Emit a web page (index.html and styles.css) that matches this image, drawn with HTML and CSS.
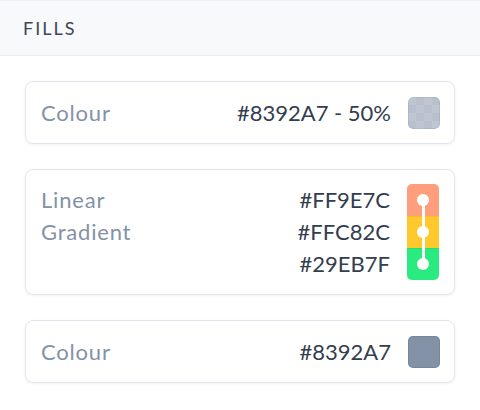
FILE: index.html
```html
<!DOCTYPE html>
<html>
<head>
<meta charset="utf-8">
<link rel="stylesheet" href="styles.css">
</head>
<body>
<div class="panel">
  <div class="header">FILLS</div>
  <div class="list">
    <div class="card">
      <div class="label">Colour</div>
      <div class="right">
        <div class="value">#8392A7 - 50%</div>
        <div class="swatch checker"><div class="tint"></div></div>
      </div>
    </div>
    <div class="card card-tall">
      <div class="label stack">
        <div>Linear</div>
        <div>Gradient</div>
      </div>
      <div class="right top">
        <div class="value stack">
          <div>#FF9E7C</div>
          <div>#FFC82C</div>
          <div>#29EB7F</div>
        </div>
        <div class="grad">
          <div class="seg seg-a"></div>
          <div class="seg seg-b"></div>
          <div class="seg seg-c"></div>
          <div class="rail"></div>
          <div class="dot dot-a"></div>
          <div class="dot dot-b"></div>
          <div class="dot dot-c"></div>
        </div>
      </div>
    </div>
    <div class="card">
      <div class="label">Colour</div>
      <div class="right">
        <div class="value">#8392A7</div>
        <div class="swatch solid"></div>
      </div>
    </div>
  </div>
</div>
</body>
</html>
```
FILE: styles.css
```css
html, body {
  margin: 0;
  padding: 0;
  background: #ffffff;
}
body {
  font-family: Lato, "Noto Sans", sans-serif;
  width: 480px;
  height: 410px;
  overflow: hidden;
}
.header {
  height: 54px;
  box-sizing: content-box;
  border-top: 1px solid #eef1f6;
  border-bottom: 1px solid #e9edf3;
  background: #f8f9fb;
  display: flex;
  align-items: center;
  padding-left: 23px;
  font-size: 18px;
  letter-spacing: 2px;
  color: #3d4656;
  font-weight: 400;
}
.list {
  padding: 25px 25px 0 25px;
  display: flex;
  flex-direction: column;
  gap: 25px;
}
.card {
  border: 1px solid #e2e7ef;
  border-radius: 8px;
  background: #fff;
  box-shadow: 0 1px 3px rgba(30, 45, 70, 0.06);
  display: flex;
  justify-content: space-between;
  align-items: center;
  padding: 15px 14px 14px 15px;
}
.card-tall {
  align-items: flex-start;
  padding: 14px 15px 14px 15px;
}
.label {
  font-size: 22px;
  color: #8392a7;
  letter-spacing: 0.8px;
  line-height: 32px;
}
.right {
  display: flex;
  align-items: center;
  gap: 17px;
}
.value {
  font-size: 22px;
  color: #333d4e;
  line-height: 32px;
  text-align: right;
  letter-spacing: 0;
}
.stack div {
  height: 32px;
}
.swatch {
  width: 32px;
  height: 32px;
  border-radius: 5px;
  box-sizing: border-box;
  overflow: hidden;
  position: relative;
}
.checker {
  background-color: #ffffff;
  background-image: conic-gradient(#f1f2f4 25%, #ffffff 0 50%, #f1f2f4 0 75%, #ffffff 0);
  background-size: 16px 16px;
}
.tint {
  width: 100%;
  height: 100%;
  background: rgba(131, 146, 167, 0.52);
  box-shadow: inset 0 0 0 1px rgba(90, 105, 130, 0.12);
  border-radius: 5px;
}
.solid {
  background: #8392a7;
  box-shadow: inset 0 0 0 1px rgba(60, 75, 100, 0.18);
}
.grad {
  width: 32px;
  height: 96px;
  border-radius: 5px;
  overflow: hidden;
  position: relative;
  display: flex;
  flex-direction: column;
  box-shadow: inset 0 0 0 1px rgba(0, 0, 0, 0.05);
}
.seg {
  height: 32px;
}
.seg-a { background: #ff9e7c; }
.seg-b { background: #ffc82c; box-shadow: inset 0 1px 0 rgba(200, 120, 60, 0.15); }
.seg-c { background: #29eb7f; box-shadow: inset 0 1px 0 rgba(40, 140, 80, 0.15); }
.rail {
  position: absolute;
  left: 14.5px;
  top: 16px;
  width: 3px;
  height: 64px;
  background: #ffffff;
}
.dot {
  position: absolute;
  left: 10px;
  width: 12px;
  height: 12px;
  border-radius: 50%;
  background: #ffffff;
}
.dot-a { top: 10px; }
.dot-b { top: 42px; }
.dot-c { top: 74px; }
```
